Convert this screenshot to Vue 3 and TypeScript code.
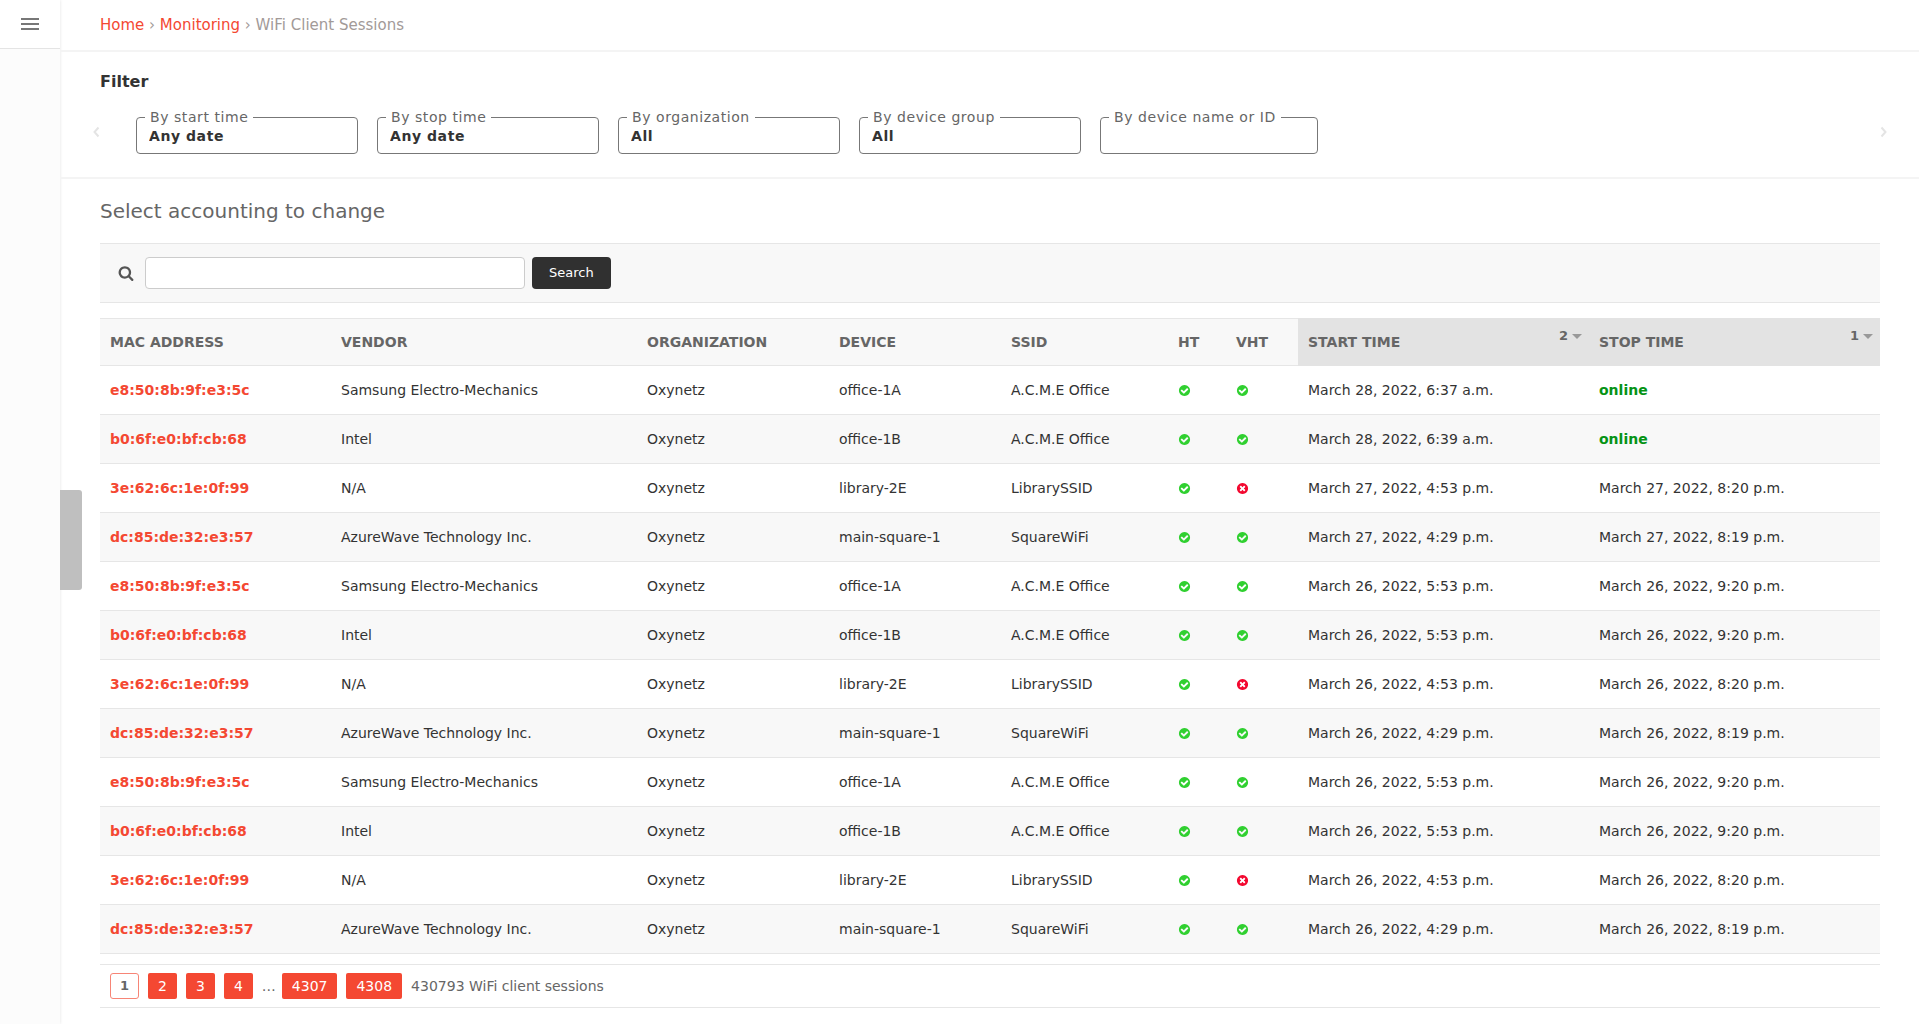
<script setup lang="ts">
import { ref } from 'vue'

interface Session {
  mac: string
  vendor: string
  device: string
  ssid: string
  vht: boolean
  start: string
  stop: string
}

const clients = [
  { mac: 'e8:50:8b:9f:e3:5c', vendor: 'Samsung Electro-Mechanics', device: 'office-1A', ssid: 'A.C.M.E Office', vht: true },
  { mac: 'b0:6f:e0:bf:cb:68', vendor: 'Intel', device: 'office-1B', ssid: 'A.C.M.E Office', vht: true },
  { mac: '3e:62:6c:1e:0f:99', vendor: 'N/A', device: 'library-2E', ssid: 'LibrarySSID', vht: false },
  { mac: 'dc:85:de:32:e3:57', vendor: 'AzureWave Technology Inc.', device: 'main-square-1', ssid: 'SquareWiFi', vht: true },
]

const times: [string, string][] = [
  ['March 28, 2022, 6:37 a.m.', 'online'],
  ['March 28, 2022, 6:39 a.m.', 'online'],
  ['March 27, 2022, 4:53 p.m.', 'March 27, 2022, 8:20 p.m.'],
  ['March 27, 2022, 4:29 p.m.', 'March 27, 2022, 8:19 p.m.'],
  ['March 26, 2022, 5:53 p.m.', 'March 26, 2022, 9:20 p.m.'],
  ['March 26, 2022, 5:53 p.m.', 'March 26, 2022, 9:20 p.m.'],
  ['March 26, 2022, 4:53 p.m.', 'March 26, 2022, 8:20 p.m.'],
  ['March 26, 2022, 4:29 p.m.', 'March 26, 2022, 8:19 p.m.'],
  ['March 26, 2022, 5:53 p.m.', 'March 26, 2022, 9:20 p.m.'],
  ['March 26, 2022, 5:53 p.m.', 'March 26, 2022, 9:20 p.m.'],
  ['March 26, 2022, 4:53 p.m.', 'March 26, 2022, 8:20 p.m.'],
  ['March 26, 2022, 4:29 p.m.', 'March 26, 2022, 8:19 p.m.'],
]

const sessions: Session[] = times.map(([start, stop], i) => ({ ...clients[i % 4], start, stop }))

const filters = [
  { id: 'start', label: 'By start time', value: 'Any date' },
  { id: 'stop', label: 'By stop time', value: 'Any date' },
  { id: 'org', label: 'By organization', value: 'All' },
  { id: 'group', label: 'By device group', value: 'All' },
]

const columns = [
  { title: 'Mac address', cls: 'c-mac' },
  { title: 'Vendor', cls: 'c-vendor' },
  { title: 'Organization', cls: 'c-org' },
  { title: 'Device', cls: 'c-device' },
  { title: 'SSID', cls: 'c-ssid' },
  { title: 'HT', cls: 'c-ht' },
  { title: 'VHT', cls: 'c-vht' },
  { title: 'Start time', cls: 'c-time', sort: 2 },
  { title: 'Stop time', cls: 'c-time', sort: 1 },
]

const deviceQuery = ref('')
const search = ref('')

const yesPath =
  'M1412 734q0-28-18-46l-91-90q-19-19-45-19t-45 19l-408 407-226-226q-19-19-45-19t-45 19l-91 90q-18 18-18 46 0 27 18 45l362 362q19 19 45 19 27 0 46-19l543-543q18-18 18-45zm252 162q0 209-103 385.5t-279.5 279.5-385.5 103-385.5-103-279.5-279.5-103-385.5 103-385.5 279.5-279.5 385.5-103 385.5 103 279.5 279.5 103 385.5z'
const noPath =
  'M1277 1122q0-26-19-45l-181-181 181-181q19-19 19-45 0-27-19-46l-90-90q-19-18-46-18-26 0-45 18l-181 181-181-181q-19-18-45-18-27 0-46 18l-90 90q-19 19-19 46 0 26 19 45l181 181-181 181q-19 19-19 45 0 27 19 46l90 90q19 18 46 18 26 0 45-18l181-181 181 181q19 18 45 18 27 0 46-18l90-90q19-19 19-46zm387-226q0 209-103 385.5t-279.5 279.5-385.5 103-385.5-103-279.5-279.5-103-385.5 103-385.5 279.5-279.5 385.5-103 385.5 103 279.5 279.5 103 385.5z'
</script>

<template>
  <div class="layout">
    <aside class="sidebar">
      <button class="menu-toggle" type="button" aria-label="Toggle menu">
        <span></span><span></span><span></span>
      </button>
    </aside>
    <button class="handle" type="button" aria-label="Open toolbar"></button>

    <div class="page">
      <nav class="breadcrumbs" aria-label="Breadcrumbs">
        <a href="#">Home</a> › <a href="#">Monitoring</a> › WiFi Client Sessions
      </nav>

      <section class="filters">
        <h2>Filter</h2>
        <div class="filter-row">
          <button class="arrow" type="button" aria-label="Previous filters">
            <svg viewBox="0 0 12 12" width="12" height="12"><path d="M10.500 1.500 6.500 6 10.500 10.500" /></svg>
          </button>
          <div class="filter-list">
            <div v-for="f in filters" :key="f.id" class="field">
              <label :for="'filter-' + f.id">{{ f.label }}</label>
              <select :id="'filter-' + f.id">
                <option>{{ f.value }}</option>
              </select>
            </div>
            <div class="field field-text">
              <label for="filter-device">By device name or ID</label>
              <input id="filter-device" v-model="deviceQuery" type="text" />
            </div>
          </div>
          <button class="arrow" type="button" aria-label="Next filters">
            <svg viewBox="0 0 12 12" width="12" height="12"><path d="M2.500 1.500 6.500 6 2.500 10.500" /></svg>
          </button>
        </div>
      </section>

      <main class="content">
        <h1>Select accounting to change</h1>

        <form class="searchbar" role="search" @submit.prevent>
          <label for="searchbar" aria-label="Search">
            <svg viewBox="0 0 1792 1792" width="16" height="16" fill="#555">
              <path d="M1216 832q0-185-131.500-316.500t-316.500-131.500-316.500 131.500-131.500 316.500 131.500 316.500 316.500 131.500 316.500-131.500 131.500-316.500zm512 832q0 52-38 90t-90 38q-54 0-90-38l-343-342q-179 124-399 124-143 0-273.500-55.500t-225-150-150-225-55.500-273.500 55.500-273.500 150-225 225-150 273.500-55.500 273.500 55.500 225 150 150 225 55.500 273.500q0 220-124 399l343 343q37 37 37 90z" />
            </svg>
          </label>
          <input id="searchbar" v-model="search" type="text" />
          <button type="submit">Search</button>
        </form>

        <table>
          <colgroup>
            <col v-for="c in columns" :key="c.title" :class="c.cls" />
          </colgroup>
          <thead>
            <tr>
              <th v-for="c in columns" :key="c.title" scope="col" :class="{ sorted: c.sort }">
                {{ c.title }}
                <span v-if="c.sort" class="sort">{{ c.sort }}<i class="caret"></i></span>
              </th>
            </tr>
          </thead>
          <tbody>
            <tr v-for="(s, i) in sessions" :key="i">
              <td><a href="#">{{ s.mac }}</a></td>
              <td>{{ s.vendor }}</td>
              <td>Oxynetz</td>
              <td>{{ s.device }}</td>
              <td>{{ s.ssid }}</td>
              <td>
                <svg class="flag" viewBox="0 0 1792 1792" role="img" aria-label="Yes"><path fill="#30d030" :d="yesPath" /></svg>
              </td>
              <td>
                <svg class="flag" viewBox="0 0 1792 1792" role="img" :aria-label="s.vht ? 'Yes' : 'No'">
                  <path :fill="s.vht ? '#30d030' : '#f3082f'" :d="s.vht ? yesPath : noPath" />
                </svg>
              </td>
              <td>{{ s.start }}</td>
              <td :class="{ online: s.stop === 'online' }">{{ s.stop }}</td>
            </tr>
          </tbody>
        </table>

        <nav class="paginator" aria-label="Pagination">
          <span class="current">1</span>
          <a href="#">2</a>
          <a href="#">3</a>
          <a href="#">4</a>
          <span class="dots">…</span>
          <a href="#">4307</a>
          <a href="#">4308</a>
          <span>430793 WiFi client sessions</span>
        </nav>
      </main>
    </div>
  </div>
</template>

<style>
body {
  margin: 0;
  background: #fff;
}
</style>

<style scoped>
* {
  box-sizing: border-box;
}

.layout {
  display: flex;
  min-height: 100vh;
  font: 14px/20px "DejaVu Sans", sans-serif;
  color: #333;
}

button,
input,
select {
  font: inherit;
  color: inherit;
}

a {
  color: #f44832;
  text-decoration: none;
}

.sidebar {
  flex: 0 0 60px;
  background: #fcfcfc;
  box-shadow: 0 0 3px rgba(0, 0, 0, 0.12);
}

.menu-toggle {
  display: flex;
  flex-direction: column;
  align-items: center;
  justify-content: center;
  gap: 3px;
  width: 100%;
  height: 49px;
  padding: 0;
  background: #fff;
  border: 0;
  border-bottom: 1px solid #e4e4e4;
}

.menu-toggle span {
  width: 18px;
  height: 2px;
  background: #777;
}

.handle {
  position: fixed;
  top: 490px;
  left: 60px;
  width: 22px;
  height: 100px;
  padding: 0;
  border: 0;
  border-radius: 0 3px 3px 0;
  background: #bfbfbf;
}

.page {
  flex: 1;
  min-width: 0;
}

.breadcrumbs {
  padding: 15px 40px;
  border-bottom: 2px solid #f4f4f4;
  font-size: 15px;
  color: #a29a98;
}

.filters {
  padding: 20px 28px 23px;
  border-bottom: 2px solid #f4f4f4;
}

.filters h2 {
  margin: 0 12px;
  font-size: 16px;
  line-height: 20px;
}

.filter-row {
  display: flex;
  align-items: flex-start;
  justify-content: space-between;
  margin-top: 25px;
}

.arrow {
  display: flex;
  align-items: center;
  width: 12px;
  height: 30px;
  padding: 0;
  border: 0;
  background: none;
}

.arrow path {
  fill: none;
  stroke: #e4e4e4;
  stroke-width: 2;
}

.filter-list {
  flex: 1;
  display: flex;
  gap: 19px;
  padding: 0 36px;
}

.field {
  position: relative;
  width: 222px;
  letter-spacing: 0.04em;
}

.field-text {
  width: 218px;
}

.field label {
  position: absolute;
  top: -10px;
  left: 9px;
  padding: 0 5px;
  background: #fff;
  color: #666;
}

.field select,
.field input {
  display: block;
  width: 100%;
  height: 37px;
  padding: 0 12px;
  border: 1px solid #777;
  border-radius: 4px;
  background: none;
  appearance: none;
  letter-spacing: inherit;
  font-weight: bold;
}

.content {
  padding: 20px 39px 16px 40px;
}

h1 {
  margin: 0 0 20px;
  font-size: 20px;
  font-weight: normal;
  line-height: 24px;
  color: #666;
}

.searchbar {
  display: flex;
  align-items: center;
  height: 60px;
  padding: 0 18px;
  background: #f8f8f8;
  border: solid #e6e6e6;
  border-width: 1px 0;
}

.searchbar label {
  display: flex;
  margin-right: 11px;
}

.searchbar input {
  width: 380px;
  height: 32px;
  padding: 0 6px;
  border: 1px solid #ccc;
  border-radius: 4px;
  background: #fff;
}

.searchbar button {
  height: 32px;
  margin-left: 7px;
  padding: 0 17px;
  border: 0;
  border-radius: 4px;
  background: #303030;
  color: #fff;
  font-size: 13px;
}

table {
  width: 100%;
  margin-top: 15px;
  table-layout: fixed;
  border-spacing: 0;
}

.c-mac { width: 231px; }
.c-vendor { width: 306px; }
.c-org { width: 192px; }
.c-device { width: 172px; }
.c-ssid { width: 167px; }
.c-ht { width: 58px; }
.c-vht { width: 72px; }
.c-time { width: 291px; }

th {
  position: relative;
  height: 48px;
  padding: 0 10px;
  background: #f8f8f8;
  border: solid #e6e6e6;
  border-width: 1px 0;
  color: #666;
  text-align: left;
  text-transform: uppercase;
}

th.sorted {
  background: #e3e3e3;
  border-color: #e3e3e3;
}

.sort {
  position: absolute;
  top: 7px;
  right: 7px;
  display: flex;
  align-items: center;
  gap: 4px;
  font-size: 13px;
}

.caret {
  border: solid transparent;
  border-width: 5px 5px 0;
  border-top-color: #999;
}

td {
  height: 49px;
  padding: 0 10px;
  border-bottom: 1px solid #e6e6e6;
}

tbody tr:nth-child(even) {
  background: #f8f8f8;
}

td a,
.online {
  font-weight: bold;
}

.online {
  color: #059314;
}

.flag {
  display: block;
  width: 13px;
  height: 13px;
}

.paginator {
  display: flex;
  align-items: center;
  gap: 9px;
  height: 44px;
  margin-top: 10px;
  padding: 0 10px;
  border: solid #e6e6e6;
  border-width: 1px 0;
  color: #666;
}

.paginator a {
  padding: 3px 10px;
  border-radius: 2px;
  background: #f44832;
  color: #fff;
}

.paginator .current {
  padding: 2px 9px;
  border: 1px solid #f78576;
  border-radius: 3px;
  font-size: 13px;
  font-weight: bold;
}

.paginator .dots {
  margin-right: -3px;
}
</style>
